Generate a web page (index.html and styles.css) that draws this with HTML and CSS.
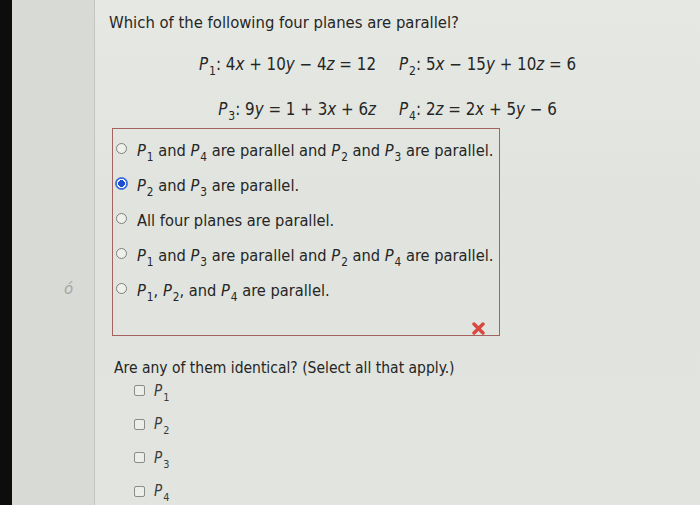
FILE: index.html
```html
<!DOCTYPE html>
<html>
<head>
<meta charset="utf-8">
<link rel="stylesheet" href="styles.css">
</head>
<body>
<div class="page">
  <div class="edge"></div>
  <div class="side"><span class="mark">ó</span></div>
  <div class="main">
    <div class="title">Which of the following four planes are parallel?</div>
    <div class="eqs">
      <div class="eq l"><i>P</i><sub>1</sub>: 4<i>x</i> + 10<i>y</i> − 4<i>z</i> = 12</div>
      <div class="eq"><i>P</i><sub>2</sub>: 5<i>x</i> − 15<i>y</i> + 10<i>z</i> = 6</div>
      <div class="eq l"><i>P</i><sub>3</sub>: 9<i>y</i> = 1 + 3<i>x</i> + 6<i>z</i></div>
      <div class="eq"><i>P</i><sub>4</sub>: 2<i>z</i> = 2<i>x</i> + 5<i>y</i> − 6</div>
    </div>
    <div class="box">
      <div class="opt"><span class="radio"></span><span class="txt"><i>P</i><sub>1</sub> and <i>P</i><sub>4</sub> are parallel and <i>P</i><sub>2</sub> and <i>P</i><sub>3</sub> are parallel.</span></div>
      <div class="opt"><span class="radio on"></span><span class="txt"><i>P</i><sub>2</sub> and <i>P</i><sub>3</sub> are parallel.</span></div>
      <div class="opt"><span class="radio"></span><span class="txt">All four planes are parallel.</span></div>
      <div class="opt"><span class="radio"></span><span class="txt"><i>P</i><sub>1</sub> and <i>P</i><sub>3</sub> are parallel and <i>P</i><sub>2</sub> and <i>P</i><sub>4</sub> are parallel.</span></div>
      <div class="opt"><span class="radio"></span><span class="txt"><i>P</i><sub>1</sub>, <i>P</i><sub>2</sub>, and <i>P</i><sub>4</sub> are parallel.</span></div>
      <div class="foot">
        <svg class="wrong" width="13" height="13" viewBox="0 0 13 13"><path d="M2 2 L11 11 M11 2 L2 11" stroke="#d9473f" stroke-width="3.4" stroke-linecap="round"/></svg>
      </div>
    </div>
    <div class="q2">Are any of them identical? (Select all that apply.)</div>
    <div class="checks">
      <div class="chk"><span class="cb"></span><span class="ctxt"><i>P</i><sub>1</sub></span></div>
      <div class="chk"><span class="cb"></span><span class="ctxt"><i>P</i><sub>2</sub></span></div>
      <div class="chk"><span class="cb"></span><span class="ctxt"><i>P</i><sub>3</sub></span></div>
      <div class="chk"><span class="cb"></span><span class="ctxt"><i>P</i><sub>4</sub></span></div>
    </div>
  </div>
</div>
</body>
</html>
```
FILE: styles.css
```css
html, body {
  margin: 0;
  padding: 0;
  height: 100%;
  overflow: hidden;
  background: #e1e4df;
}
.page {
  display: flex;
  height: 505px;
  font-family: "DejaVu Sans Condensed", "DejaVu Sans", sans-serif;
  color: #252625;
}
.edge {
  width: 12px;
  background: #0d0d0d;
  flex: none;
}
.side {
  width: 83px;
  flex: none;
  background: #d8dad5;
  border-right: 1px solid #c3c5c0;
  padding: 279px 0 0 52px;
  box-sizing: border-box;
}
.mark {
  font-family: "DejaVu Sans", sans-serif;
  font-style: italic;
  font-size: 15px;
  color: #a4a6a2;
}
.main {
  flex: 1;
  padding: 13px 0 0 14px;
  background: linear-gradient(#e6e8e4, #e0e3de 40%, #e1e4df);
}
.title {
  font-size: 16.5px;
  line-height: 20px;
}
i { font-style: italic; }
sub {
  font-size: 0.72em;
  vertical-align: -5px;
  line-height: 0;
  margin-left: 1px;
}
.eqs {
  display: grid;
  grid-template-columns: 267px auto;
  column-gap: 23px;
  row-gap: 25px;
  margin-top: 21px;
  font-size: 16.8px;
  line-height: 20px;
}
.eq.l { text-align: right; }
.box {
  margin: 9px 0 0 3px;
  width: 388px;
  height: 208px;
  box-sizing: border-box;
  border: 1.5px solid #a4635e;
  padding: 4px 0 0 3px;
}
.opt {
  display: flex;
  align-items: center;
  height: 35px;
  font-size: 16.3px;
  line-height: 20px;
}
.radio {
  width: 11px;
  height: 11px;
  box-sizing: border-box;
  border: 1px solid #7f817e;
  border-radius: 50%;
  background: #eef0ec;
  margin-right: 10px;
  flex: none;
  margin-top: -4px;
}
.radio.on {
  width: 13px;
  height: 13px;
  margin-left: -1px;
  margin-right: 9px;
  border: 1.5px solid #3b6fd8;
  background: radial-gradient(circle, #1f4fd0 0 3.2px, #f2f4f8 3.6px 4.4px, #3b6fd8 4.8px);
}
.foot {
  display: flex;
  justify-content: flex-end;
  padding: 14px 14px 0 0;
}
.q2 {
  margin: 22px 0 0 5px;
  font-size: 15.5px;
  line-height: 20px;
}
.checks {
  margin-top: -4px;
  padding-left: 25px;
}
.chk {
  display: flex;
  align-items: center;
  height: 33.5px;
  font-size: 15px;
  line-height: 18px;
}
.cb {
  width: 11px;
  height: 11px;
  box-sizing: border-box;
  border: 1.5px solid #8a8c89;
  border-radius: 2px;
  background: #eceee9;
  margin-right: 9px;
  flex: none;
}
.ctxt {
  color: #3a3b3a;
}
```
